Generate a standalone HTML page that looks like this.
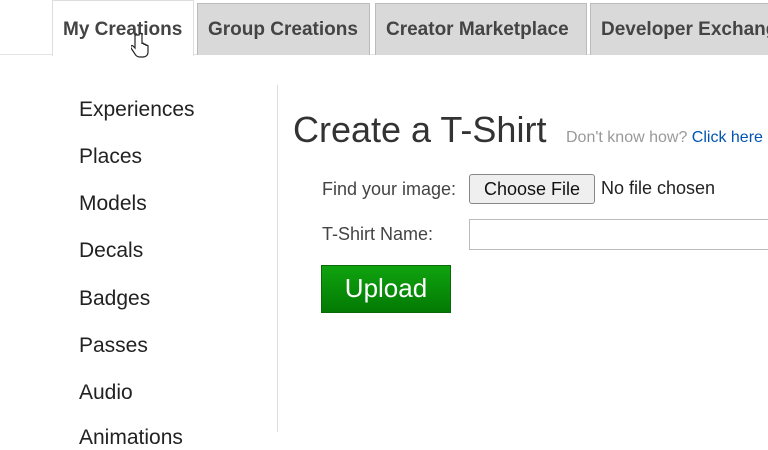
<!DOCTYPE html>
<html><head><style>
body{margin:0;width:768px;height:432px;overflow:hidden;background:#fff;font-family:"Liberation Sans",sans-serif;position:relative;color:#333}
.a{position:absolute;white-space:nowrap}
.tab{position:absolute;top:3px;height:52px;background:#d9d9d9;border:1px solid #bbb;border-bottom:none;box-sizing:border-box;font-size:19px;font-weight:bold;color:#444;line-height:52px;padding-left:10px}
.side{position:absolute;left:79px;font-size:21px;color:#222}
</style></head><body>
<div class="a" style="left:0;top:54px;width:768px;height:1px;background:#e4e4e4"></div>
<div class="tab" style="left:52px;top:0;width:142px;height:56px;background:#fff;border-color:#ddd;line-height:58px">My Creations</div>
<div class="tab" style="left:197px;width:173px">Group Creations</div>
<div class="tab" style="left:375px;width:212px">Creator Marketplace</div>
<div class="tab" style="left:590px;width:200px">Developer Exchange</div>
<svg class="a" style="left:131px;top:33px" width="18" height="26" viewBox="0 0 18 26"><path d="M4 2v13l-2-2c-1-1-3 0-2 2l4 6c1 2 3 3 5 3h3c3 0 5-2 5-5v-6c0-1-2-1-2 0v-1c0-1-2-1-2 0v-1c0-1-2-1-2 0V2c0-2-3-2-3 0z" fill="#fff" stroke="#222" stroke-width="1.2"/></svg>
<div class="a" style="left:277px;top:85px;width:1px;height:347px;background:#ddd"></div>
<div class="side" style="top:98px">Experiences</div>
<div class="side" style="top:145px">Places</div>
<div class="side" style="top:192px">Models</div>
<div class="side" style="top:239px">Decals</div>
<div class="side" style="top:287px">Badges</div>
<div class="side" style="top:334px">Passes</div>
<div class="side" style="top:381px">Audio</div>
<div class="side" style="top:426px">Animations</div>
<div class="a" style="left:293px;top:109px;font-size:36px;color:#333">Create a T-Shirt</div>
<div class="a" style="left:566px;top:129px;font-size:16px;color:#999">Don't know how? <span style="color:#0055b3">Click here</span></div>
<div class="a" style="left:322px;top:179px;font-size:18px;color:#444">Find your image:</div>
<div class="a" style="left:469px;top:174px;width:126px;height:30px;box-sizing:border-box;border:1px solid #888;border-radius:3px;background:#efefef;font-size:18px;line-height:28px;text-align:center;color:#111">Choose File</div>
<div class="a" style="left:601px;top:178px;font-size:18px;color:#222">No file chosen</div>
<div class="a" style="left:322px;top:224px;font-size:18px;color:#444">T-Shirt Name:</div>
<div class="a" style="left:469px;top:219px;width:310px;height:31px;box-sizing:border-box;border:1px solid #bbb"></div>
<div class="a" style="left:321px;top:265px;width:130px;height:48px;box-sizing:border-box;border:1px solid #0a6a0a;background:linear-gradient(#0fa30f,#037a03);color:#fff;font-size:26px;line-height:44px;text-align:center">Upload</div>
</body></html>
